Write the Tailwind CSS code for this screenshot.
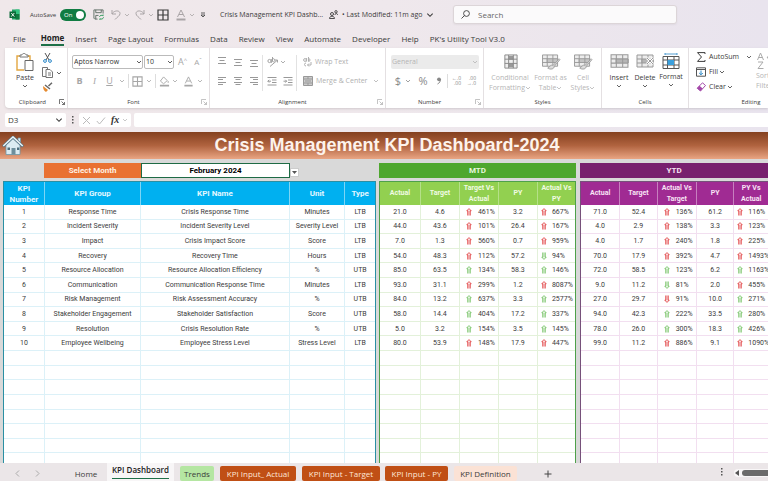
<!DOCTYPE html>
<html lang="en">
<head>
    <meta charset="UTF-8">
    <meta name="viewport" content="width=device-width, initial-scale=1.0">
    <title>Crisis Management KPI Dashboard</title>
    <script src="https://cdn.jsdelivr.net/npm/@tailwindcss/browser@4"></script>
</head>
<body class="h-screen flex flex-col overflow-hidden bg-linear-to-r from-[#f0e8ea] via-[#efe8ec] to-[#e9e4ee] font-['Open_Sans','Noto_Sans',sans-serif] text-[8px] leading-[10px] text-[#3b3b3b]">

    <svg class="hidden">
        <defs>
            <symbol id="chev" viewBox="0 0 6 6"><path d="M1 2l2 2 2-2" fill="none" stroke="currentColor" stroke-width=".8"/></symbol>
            <symbol id="launch" viewBox="0 0 6 6"><path d="M.5 5V.5H5M2.5 2.5l3 3M5.500 3v2.500H3" fill="none" stroke="currentColor" stroke-width=".7"/></symbol>
            <symbol id="grid" viewBox="0 0 12 12"><path d="M1 1h10v10H1zM6 1v10M1 6h10" fill="none" stroke="currentColor" stroke-width="1.200"/></symbol>
            <symbol id="fontcolor" viewBox="0 0 12 12"><path d="M2.500 8L6 1l3.500 7M4 5.500h4" fill="none" stroke="currentColor"/><path d="M1.500 9.500h9v2h-9z" fill="currentColor"/></symbol>
            <symbol id="table" viewBox="0 0 18 14"><path d="M1 1h16v12H1z" fill="#ececec"/><path d="M5 5h13v4H5z" fill="#b5b5b5"/><path d="M1 1h16v12H1zM1 5h16M1 9h16M6 1v12M12 1v12" fill="none" stroke="currentColor"/></symbol>
            <symbol id="brush" viewBox="0 0 20 17"><path d="M1 1h16v12H1z" fill="#ececec"/><path d="M5 5h12v4H5z" fill="#c4c4c4"/><path d="M1 1h16v12H1zM1 5h16M1 9h16M6 1v12M12 1v12" fill="none" stroke="currentColor"/><path d="M18.500 5l-6 7c-3-1-4 2-6 3 3 2 7 1 7-2l6-7z" fill="#ddd" stroke="currentColor" stroke-width=".9"/></symbol>
            <symbol id="up" viewBox="0 0 6 8"><path d="M3 .6L.8 2.800h1v4.700M3 .6l2.200 2.200h-1v4.700" fill="none" stroke="currentColor" stroke-width=".9"/><path d="M1.800 2.500h2.400v5H1.800z" fill="currentColor" fill-opacity=".25"/></symbol>
            <symbol id="down" viewBox="0 0 6 8"><path d="M3 7.400L.8 5.200h1V.5M3 7.400l2.200-2.200h-1V.5" fill="none" stroke="currentColor" stroke-width=".9"/><path d="M1.800.5h2.400v5H1.800z" fill="currentColor" fill-opacity=".25"/></symbol>
        </defs>
    </svg>

    <!-- Title bar -->
    <header class="h-[29px] shrink-0 flex items-center pl-[9px]">
        <svg class="w-[11px] h-[11px]" viewBox="0 0 11 11"><path d="M3 .5h7.500v10H3z" fill="#21a366"/><path d="M6.500.5h4V5h-4z" fill="#33c481"/><path d="M6.500 5h4v5.500h-4z" fill="#107c41"/><path d="M.5 2.500h6.500v6.500H.5z" fill="#0b6b38"/><path d="M2.300 4l3 3.600M5.300 4l-3 3.600" stroke="#fff" stroke-width=".9"/></svg>
        <label for="autosave" class="ml-[10px] w-[30px] text-[6px]">AutoSave</label>
        <span class="relative w-[26px] h-[12px] rounded-full bg-[#117c43] flex items-center justify-between pl-1 pr-[2px] text-[6px] text-white">
            <input id="autosave" type="checkbox" checked class="absolute inset-0 opacity-0">On<span class="w-2 h-2 rounded-full bg-white"></span>
        </span>
        <button class="ml-[7px]" aria-label="Save"><svg class="w-[11px] h-[11px] text-[#5b6b62]" viewBox="0 0 12 12" fill="none" stroke="currentColor"><path d="M11 5V1H1v9l1 1h3M3 1v3h6V1M3 11V7h3"/><path d="M7 8.500a2.500 2.500 0 0 1 4-1V6M11.500 9a2.500 2.500 0 0 1-4 1.500V12" stroke="#2f9a5b"/></svg></button>
        <button class="ml-[7px] flex items-center text-[#a9a4a6]" aria-label="Undo"><svg class="w-[10px] h-[11px]" viewBox="0 0 10 11" fill="none" stroke="currentColor"><path d="M1 1v4h4M1 5c2-4 8-4 8-.5C9 7 6 8 4 10.500"/></svg><svg class="ml-[3px] w-[6px] h-[6px]"><use href="#chev"/></svg></button>
        <button class="ml-[5px] flex items-center text-[#a9a4a6]" aria-label="Redo"><svg class="w-[10px] h-[11px]" viewBox="0 0 10 11" fill="none" stroke="currentColor"><path d="M9 1v4H5M9 5C7 1 1 1 1 4.500 1 7 4 8 6 10.500"/></svg><svg class="ml-[3px] w-[6px] h-[6px]"><use href="#chev"/></svg></button>
        <button class="ml-[3px]" aria-label="Borders"><svg class="w-[12px] h-[12px]"><use href="#grid"/></svg></button>
        <button class="ml-[6px] flex items-center text-[#a9a4a6]" aria-label="Font color"><svg class="w-[12px] h-[12px]"><use href="#fontcolor"/></svg><svg class="ml-[2px] w-[6px] h-[6px]"><use href="#chev"/></svg></button>
        <button class="ml-[5px]" aria-label="Customize toolbar"><svg class="w-[6px] h-[6px]" viewBox="0 0 6 6" fill="none" stroke="currentColor" stroke-width=".8"><path d="M1 1h4M1 3l2 2 2-2z"/></svg></button>
        <span class="ml-[14px] w-[109px] text-[7px] whitespace-nowrap">Crisis Management KPI Dashb...</span>
        <svg class="w-[9px] h-[9px]" viewBox="0 0 9 9" fill="none" stroke="currentColor" stroke-width=".9"><circle cx="3" cy="4" r="1.500"/><path d="M.5 8.500c0-3 5-3 5 0zM6 5c0-2 2.500-2 2.500 0"/><circle cx="7" cy="1.800" r="1.200"/></svg>
        <button class="ml-[4px] w-[92px] flex items-center justify-between text-[7px] whitespace-nowrap">• Last Modified: 11m ago<svg class="w-[8px] h-[8px]"><use href="#chev"/></svg></button>
        <label class="ml-[19px] w-[224px] h-[19px] rounded-[3px] bg-[#fbfafb] border border-[#dcd5d8] shadow-xs flex items-center pl-[7px]">
            <svg class="w-[9px] h-[9px]" viewBox="0 0 9 9" fill="none" stroke="currentColor" stroke-width=".9"><circle cx="5.500" cy="3.500" r="2.900"/><path d="M3.500 5.500L.5 8.500"/></svg>
            <input type="text" placeholder="Search" aria-label="Search" class="ml-2 flex-1 min-w-0 outline-none placeholder:text-[#666]">
        </label>
    </header>

    <!-- Ribbon tabs -->
    <nav class="h-[19px] shrink-0 flex items-center gap-[11px] pl-[13px] whitespace-nowrap">
        <button class="mr-[4px]">File</button>
        <button class="h-[14px] border-b-2 border-[#1e7048] font-bold text-[#222]">Home</button>
        <button>Insert</button>
        <button>Page Layout</button>
        <button>Formulas</button>
        <button>Data</button>
        <button>Review</button>
        <button>View</button>
        <button>Automate</button>
        <button>Developer</button>
        <button>Help</button>
        <button>PK's Utility Tool V3.0</button>
    </nav>

    <!-- Ribbon -->
    <div class="h-[60px] shrink-0 ml-[5px] flex overflow-hidden rounded-bl-[4px] bg-white shadow-sm text-[7px] leading-[10px]">
        <section class="w-[63px] shrink-0 flex flex-col border-r border-[#e4e0e2]">
            <div class="h-[47px] flex pt-[5px]">
                <button class="w-[36px] pl-[4px] flex flex-col items-center">
                    <svg class="w-[18px] h-[19px]" viewBox="0 0 18 19" fill="none"><path d="M12 4V3H1v14h7" stroke="#e3a640" stroke-width="1.400"/><path d="M12 3h2v4" stroke="#e3a640" stroke-width="1.400"/><path d="M4 4V2h2c0-2 4-2 4 0h2v2z" fill="#fff" stroke="#777"/><path d="M9 7.500h8v10H9z" fill="#fff" stroke="#666"/></svg>
                    <span class="mt-[1px]">Paste</span>
                    <svg class="w-[6px] h-[6px]"><use href="#chev"/></svg>
                </button>
                <div class="flex flex-col gap-[4px] pl-[1px]">
                    <button aria-label="Cut"><svg class="ml-[1px] w-[9px] h-[10px]" viewBox="0 0 9 10" fill="none"><path d="M2 0l4 7M7 0L3 7" stroke="#555"/><circle cx="2" cy="8" r="1.400" stroke="#2b88c8"/><circle cx="7" cy="8" r="1.400" stroke="#2b88c8"/></svg></button>
                    <button class="flex items-center gap-[3px]" aria-label="Copy"><svg class="w-[11px] h-[11px]" viewBox="0 0 11 11" fill="#fff" stroke="#666" stroke-width=".9"><path d="M.5.5h5v9h-5z"/><path d="M4 2.500h4l2.500 2.500v5.500H4zM6 6h3M6 8h3"/></svg><svg class="w-[6px] h-[6px]"><use href="#chev"/></svg></button>
                    <button aria-label="Format painter"><svg class="w-[11px] h-[10px]" viewBox="0 0 11 10"><path d="M1 4l5 4-2 2C2 9 1 7 1 4z" fill="#e58a2f"/><path d="M10 .8L6.500 4M3 3l5 4" stroke="#666" stroke-width="1.500"/></svg></button>
                </div>
            </div>
            <div class="flex items-center justify-end gap-[13px] pr-[2px] h-[13px] text-[6px]">Clipboard<svg class="w-[6px] h-[6px]"><use href="#launch"/></svg></div>
        </section>

        <section class="w-[142px] shrink-0 flex flex-col border-r border-[#e4e0e2]">
            <div class="h-[47px] flex flex-col gap-[5px] pt-[7px] pl-1 text-[#a6a6a6]">
                <div class="flex h-[14px] items-center">
                    <span class="grid w-[71px] items-center text-[#333]">
                        <select aria-label="Font" class="col-start-1 row-start-1 h-[14px] appearance-none border border-[#bbb] rounded-[2px] pl-[1px]"><option>Aptos Narrow</option></select>
                        <svg class="col-start-1 row-start-1 justify-self-end mr-[1px] w-[6px] h-[6px] pointer-events-none"><use href="#chev"/></svg>
                    </span>
                    <span class="grid ml-[1px] w-[30px] items-center text-[#333]">
                        <select aria-label="Font size" class="col-start-1 row-start-1 h-[14px] appearance-none border border-[#bbb] rounded-[2px] pl-[1px]"><option>10</option></select>
                        <svg class="col-start-1 row-start-1 justify-self-end mr-[1px] w-[6px] h-[6px] pointer-events-none"><use href="#chev"/></svg>
                    </span>
                    <button class="ml-[4px] flex text-[9px]" aria-label="Increase font size">A<span class="text-[6px] leading-[6px]">^</span></button>
                    <button class="ml-[7px] flex text-[8px]" aria-label="Decrease font size">A<span class="text-[6px] leading-[6px]">ˇ</span></button>
                </div>
                <div class="flex h-[14px] items-center text-[9px]">
                    <button class="w-[15px] font-bold">B</button>
                    <button class="w-[15px] italic font-['Liberation_Serif',serif]">I</button>
                    <button class="w-[15px] underline">U</button>
                    <svg class="ml-[2px] w-[6px] h-[6px]"><use href="#chev"/></svg>
                    <span class="ml-[3px] w-px h-[14px] bg-[#ddd]"></span>
                    <button class="ml-[3px]" aria-label="Borders"><svg class="w-[11px] h-[11px]"><use href="#grid"/></svg></button>
                    <svg class="ml-[3px] w-[6px] h-[6px]"><use href="#chev"/></svg>
                    <span class="ml-[3px] w-px h-[14px] bg-[#ddd]"></span>
                    <button class="ml-[3px]" aria-label="Fill color"><svg class="w-[11px] h-[11px]" viewBox="0 0 12 12"><path d="M5 1l4 4-4 3.500L1.500 5.500zM10 5.500v2" fill="none" stroke="currentColor"/><path d="M1 9.500h10v2H1z" fill="currentColor"/></svg></button>
                    <svg class="ml-[2px] w-[6px] h-[6px]"><use href="#chev"/></svg>
                    <button class="ml-[5px]" aria-label="Font color"><svg class="w-[11px] h-[11px]"><use href="#fontcolor"/></svg></button>
                    <svg class="ml-[3px] w-[6px] h-[6px]"><use href="#chev"/></svg>
                </div>
            </div>
            <div class="grid grid-cols-[1fr_auto_1fr] items-center pr-[2px] h-[13px] text-[6px]"><span></span><span class="pr-2">Font</span><svg class="justify-self-end w-[6px] h-[6px] text-[#aaa]"><use href="#launch"/></svg></div>
        </section>

        <section class="w-[176px] shrink-0 flex flex-col border-r border-[#e4e0e2]">
            <div class="h-[47px] flex pt-[7px] text-[#999]">
                <div class="flex flex-col gap-[9px] pl-[7px] pt-[2px]">
                    <div class="flex gap-[6px]">
                        <button aria-label="Top align"><svg class="w-[10px] h-[10px]" viewBox="0 0 10 10" stroke="currentColor"><path d="M1 .5h8M2.500 3.500h5M1 6.500h8"/></svg></button>
                        <button aria-label="Middle align"><svg class="w-[10px] h-[10px]" viewBox="0 0 10 10" stroke="currentColor"><path d="M1 2.500h8M2.500 5.500h5M1 8.500h8"/></svg></button>
                        <button aria-label="Bottom align"><svg class="w-[10px] h-[10px]" viewBox="0 0 10 10" stroke="currentColor"><path d="M1 3.500h8M2.500 6.500h5M1 9.500h8"/></svg></button>
                    </div>
                    <div class="flex gap-[6px]">
                        <button aria-label="Align left"><svg class="w-[10px] h-[10px]" viewBox="0 0 10 10" stroke="currentColor"><path d="M1 1.500h8M1 3.500h5M1 6.500h8M1 8.500h5"/></svg></button>
                        <button aria-label="Center"><svg class="w-[10px] h-[10px]" viewBox="0 0 10 10" stroke="currentColor"><path d="M1 1.500h8M2.500 3.500h5M1 6.500h8M2.500 8.500h5"/></svg></button>
                        <button aria-label="Align right"><svg class="w-[10px] h-[10px]" viewBox="0 0 10 10" stroke="currentColor"><path d="M1 1.500h8M4 3.500h5M1 6.500h8M4 8.500h5"/></svg></button>
                    </div>
                </div>
                <div class="ml-[3px] h-[36px] border-l border-[#e2e2e2] flex flex-col gap-[9px] pl-[4px] pt-[2px]">
                    <button class="flex items-center gap-[2px]" aria-label="Orientation"><svg class="w-[11px] h-[10px]" viewBox="0 0 11 10" fill="none" stroke="currentColor" stroke-width=".9"><circle cx="2.500" cy="4" r="1.600"/><path d="M4.300 2v4M5.500 0v4.500a1.500 1.500 0 1 0 0-2.500M3 9.500l7-6M8 3h2.500v2.500"/></svg><svg class="w-[6px] h-[6px]"><use href="#chev"/></svg></button>
                    <div class="flex gap-[6px]">
                        <button aria-label="Decrease indent"><svg class="w-[10px] h-[10px]" viewBox="0 0 10 10" fill="none" stroke="currentColor"><path d="M.5 1.500h9M5 4h4.500M5 6.500h4.500M.5 9h9M4 5.200H.8l1.400-1.400M.8 5.200l1.400 1.400"/></svg></button>
                        <button aria-label="Increase indent"><svg class="w-[10px] h-[10px]" viewBox="0 0 10 10" fill="none" stroke="currentColor"><path d="M.5 1.500h9M5 4h4.500M5 6.500h4.500M.5 9h9M.5 5.200h3.200L2.300 3.800M3.700 5.200L2.300 6.600"/></svg></button>
                    </div>
                </div>
                <div class="ml-[3px] h-[36px] border-l border-[#e2e2e2] flex flex-col gap-[9px] pl-[6px] pt-[2px] text-[#b0b0b0]">
                    <button class="flex items-center gap-[3px]"><svg class="w-[9px] h-[10px]" viewBox="0 0 9 10" fill="none" stroke="currentColor"><circle cx="2" cy="3" r="1.400"/><path d="M3.600 1v3.600M5.500 0v4.500a1.400 1.400 0 1 0 0-3M3 6a1.500 1.500 0 1 0 0 3M8 5v3H4.500l1.500-1.500M4.500 8L6 9.500"/></svg>Wrap Text</button>
                    <button class="flex items-center gap-[3px]"><svg class="w-[10px] h-[10px]" viewBox="0 0 10 10" fill="none" stroke="#999"><path d="M.5.5h9v9h-9z" fill="#ccc"/><path d="M.5 3h9M.5 7h9M5 .5V3M5 7v2.500M2 5h6"/></svg>Merge &amp; Center<svg class="ml-[3px] w-[6px] h-[6px]"><use href="#chev"/></svg></button>
                </div>
            </div>
            <div class="grid grid-cols-[1fr_auto_1fr] items-center pr-[2px] h-[13px] text-[6px]"><span></span><span class="pr-2">Alignment</span><svg class="justify-self-end w-[6px] h-[6px] text-[#aaa]"><use href="#launch"/></svg></div>
        </section>

        <section class="w-[98px] shrink-0 flex flex-col border-r border-[#e4e0e2]">
            <div class="h-[47px] flex flex-col gap-[5px] pt-[7px] pl-[5px] pr-[4px] text-[#888]">
                <span class="grid items-center text-[#b5b5b5]">
                    <select aria-label="Number format" class="col-start-1 row-start-1 h-[14px] appearance-none bg-[#ebebeb] rounded-[2px] pl-[1px]"><option>General</option></select>
                    <svg class="col-start-1 row-start-1 justify-self-end mr-[1px] w-[6px] h-[6px] pointer-events-none"><use href="#chev"/></svg>
                </span>
                <div class="flex h-[14px] items-center text-[11px]">
                    <button class="w-[14px]">$</button>
                    <svg class="mr-[4px] w-[6px] h-[6px]"><use href="#chev"/></svg>
                    <button class="w-[16px]">%</button>
                    <button class="w-[16px]" aria-label="Comma style"><svg class="mx-auto w-[6px] h-[8px]" viewBox="0 0 6 8"><circle cx="3" cy="2.300" r="1.900" fill="currentColor"/><path d="M4.500 2c0 2.500-1 4-3 5" fill="none" stroke="currentColor"/></svg></button>
                    <span class="mr-[3px] w-px h-[14px] bg-[#ddd]"></span>
                    <button class="flex flex-col w-[10px] text-[5px] leading-[5px] items-end" aria-label="Increase decimal"><span>←.0</span><span>.00</span></button>
                    <button class="ml-[5px] flex flex-col w-[10px] text-[5px] leading-[5px] items-end" aria-label="Decrease decimal"><span>.00</span><span>→.0</span></button>
                </div>
            </div>
            <div class="grid grid-cols-[1fr_auto_1fr] items-center pr-[2px] h-[13px] text-[6px]"><span></span><span class="pr-2">Number</span><svg class="justify-self-end w-[6px] h-[6px] text-[#aaa]"><use href="#launch"/></svg></div>
        </section>

        <section class="w-[118px] shrink-0 flex flex-col border-r border-[#e4e0e2]">
            <div class="h-[47px] flex pt-[6px] pl-[4px] text-[#b5b5b5]">
                <button class="w-[44px] flex flex-col items-center gap-[3px]"><svg class="w-[17px] h-[16px] text-[#888]" viewBox="0 0 18 17"><path d="M3 1h13v14H3z" fill="#eee"/><path d="M7 2h5v4H7zM7 10h5v4H7z" fill="#999"/><path d="M3 1h13v14H3zM3 5.500h13M3 10h13M7 1v14M12 1v14" fill="none" stroke="currentColor"/></svg><span>Conditional<br><span class="flex items-center">Formatting<svg class="w-[6px] h-[6px]"><use href="#chev"/></svg></span></span></button>
                <button class="w-[37px] flex flex-col items-center gap-[3px]"><svg class="w-[20px] h-[16px] text-[#999]"><use href="#brush"/></svg><span>Format as<br><span class="flex items-center justify-center">Table<svg class="w-[6px] h-[6px]"><use href="#chev"/></svg></span></span></button>
                <button class="w-[28px] flex flex-col items-center gap-[3px]"><svg class="w-[20px] h-[16px] text-[#999]"><use href="#brush"/></svg><span>Cell<br><span class="flex items-center">Styles<svg class="w-[6px] h-[6px]"><use href="#chev"/></svg></span></span></button>
            </div>
            <div class="h-[13px] flex items-center justify-center text-[6px]">Styles</div>
        </section>

        <section class="w-[87px] shrink-0 flex flex-col border-r border-[#e4e0e2]">
            <div class="h-[47px] flex pt-[5px] pl-[4px]">
                <button class="w-[26px] flex flex-col items-center"><svg class="w-[19px] h-[16px] text-[#999]"><use href="#table"/></svg><span class="mt-[4px]">Insert</span><svg class="w-[6px] h-[6px]"><use href="#chev"/></svg></button>
                <button class="w-[26px] flex flex-col items-center"><svg class="w-[18px] h-[16px] text-[#999]" viewBox="0 0 18 16"><use href="#table" width="18" height="16"/><path d="M11 5l6 6M17 5l-6 6" stroke="#fff" stroke-width="2.500"/><path d="M11 5l6 6M17 5l-6 6" stroke="#999"/></svg><span class="mt-[4px]">Delete</span><svg class="w-[6px] h-[6px]"><use href="#chev"/></svg></button>
                <button class="w-[26px] flex flex-col items-center"><svg class="w-[18px] h-[16px]" viewBox="0 0 18 16" fill="none"><path d="M3 0v2M15 0v2M3 1h12" stroke="#2b88c8" stroke-width=".8"/><path d="M1 3.500h16v12H1zM1 7h16M1 12h16M5.500 3.500v12M12 3.500v12" stroke="#555"/><path d="M5.500 7H12v5H5.500z" fill="#3ba0dd"/></svg><span class="mt-[3px]">Format</span><svg class="w-[6px] h-[6px]"><use href="#chev"/></svg></button>
            </div>
            <div class="h-[13px] flex items-center justify-center text-[6px]">Cells</div>
        </section>

        <section class="w-[124px] shrink-0 flex flex-col">
            <div class="h-[47px] flex pl-[7px] pt-1">
                <div class="w-[56px] flex flex-col gap-[5px]">
                    <button class="flex items-center"><svg class="mr-[3px] w-[10px] h-[10px]" viewBox="0 0 10 10" fill="none" stroke="currentColor"><path d="M9 2V.6H1.500L5.500 5l-4 4.400H9V8"/></svg>AutoSum<svg class="ml-auto w-[6px] h-[6px]"><use href="#chev"/></svg></button>
                    <button class="flex items-center"><svg class="mr-[3px] w-[10px] h-[10px]" viewBox="0 0 10 10" fill="none"><path d="M.5.8h9v8.400h-9zM.5 2.500h9" stroke="#555"/><path d="M5 3.500v4M3.200 6L5 7.800 6.800 6" stroke="#2b88c8"/></svg>Fill<svg class="ml-[1px] w-[6px] h-[6px]"><use href="#chev"/></svg></button>
                    <button class="flex items-center"><svg class="mr-[3px] w-[10px] h-[10px]" viewBox="0 0 10 10"><path d="M6.500.8l3 2.700-5 5.500-3.300-2.800z" fill="#fff" stroke="#a347a8"/><path d="M3.500 3.700l3.200 2.900L4.500 9 1.200 6.200z" fill="#a347a8"/></svg>Clear<svg class="ml-[1px] w-[6px] h-[6px]"><use href="#chev"/></svg></button>
                </div>
                <button class="pl-[4px] flex flex-col items-start text-left text-[#b5b5b5]">
                    <svg class="w-[20px] h-[18px]" viewBox="0 0 20 18" fill="none" stroke="#aaa"><path d="M1.500 8l3-7 3 7M2.500 5.500h4M2 10h5l-5 6.500h5.500M11 5h8l-3 4v4l-2-1V9z"/></svg>
                    <span class="mt-[1px] whitespace-nowrap">Sort &amp;<br>Filter</span>
                </button>
            </div>
            <div class="h-[13px] flex items-center justify-center text-[6px]">Editing</div>
        </section>
    </div>

    <!-- Formula bar -->
    <div class="h-[24px] shrink-0 flex items-center pl-[5px]">
        <button class="w-[61px] h-[14px] rounded-[2px] bg-white flex items-center justify-between px-[3px]">D3<svg class="w-[8px] h-[8px]"><use href="#chev"/></svg></button>
        <svg class="ml-[5px] w-[4px] h-[8px]" viewBox="0 0 4 8" fill="#555"><path d="M1 0h1.500v1.500H1zM1 3h1.500v1.500H1zM1 6h1.500v1.500H1z"/></svg>
        <div class="ml-[4px] w-[52px] h-[14px] rounded-[2px] bg-white flex items-center gap-[5px] pl-[3px] text-[#bbb]">
            <svg class="w-[9px] h-[9px]" viewBox="0 0 9 9" stroke="currentColor"><path d="M1 1l7 7M8 1L1 8"/></svg>
            <svg class="w-[10px] h-[9px]" viewBox="0 0 10 9" fill="none" stroke="currentColor"><path d="M.8 5l2.700 3L9 1.500"/></svg>
            <button class="flex items-center font-['Liberation_Serif',serif] italic font-bold text-[10px] text-[#333]">fx<svg class="ml-[3px] w-[6px] h-[6px] text-[#bbb]"><use href="#chev"/></svg></button>
        </div>
        <input type="text" aria-label="Formula" class="ml-[3px] flex-1 h-[14px] bg-white rounded-l-[2px] outline-none">
    </div>

    <!-- Sheet -->
    <main class="flex-1 min-h-0 overflow-hidden bg-[#d9d9d9] font-['Roboto','Liberation_Sans',sans-serif]">
        <div class="h-[27px] grid grid-cols-[24px_1fr_18px] items-center px-[2px] bg-linear-to-b from-[#84401f] via-[#b0633f] to-[#e9a583]">
            <svg class="w-[22px] h-[20px]" viewBox="0 0 22 20"><path d="M4 9v9.500h14V9l-7-6.500z" fill="#dcecf2" stroke="#6d98aa" stroke-width=".8"/><path d="M16 2h2.500v5L16 5z" fill="#dcecf2" stroke="#6d98aa" stroke-width=".7"/><path d="M1 10.500L11 1l10 9.500" fill="none" stroke="#54788a" stroke-width="2.800"/><path d="M1.300 10L11 .9l9.700 9.100" fill="none" stroke="#eef6f8" stroke-width="1.400"/><path d="M9.500 12h4v6.500h-4z" fill="#6e8f9c"/><path d="M5.500 11.500H8V14H5.500zM15 11.500h2.300V14H15z" fill="#4d6f7e"/></svg>
            <h1 class="text-center font-['Liberation_Sans',sans-serif] font-bold text-[18px] leading-[27px] text-[#fdf3ec]">Crisis Management KPI Dashboard-2024</h1>
        </div>

        <div class="flex pl-[3px] mt-[4px]">
            <!-- KPI list -->
            <div class="w-[373px] grow-373 basis-0">
                <div class="flex h-[15px] mb-[3px]">
                    <span class="w-[11%]"></span>
                    <label for="month" class="w-[26%] bg-[#e97132] text-center leading-[15px] font-bold text-[#fff0e2]">Select Month</label>
                    <select id="month" class="w-[40%] appearance-none border border-[#1e6b45] bg-white text-center font-bold text-black"><option>February 2024</option></select>
                    <span class="mt-[5px] w-[9px] h-[9px] bg-white border border-[#ccc] flex items-center justify-center"><svg class="w-[5px] h-[3px]" viewBox="0 0 5 3"><path d="M0 0h5L2.500 3z" fill="#555"/></svg></span>
                </div>
                <table class="w-full h-[287px] table-fixed border-separate border-spacing-0 border-x border-t border-[#2a8fa3] bg-white text-center text-[7px] leading-[10px]">
                    <colgroup><col class="w-[11%]"><col class="w-[26%]"><col class="w-[40%]"><col class="w-[15%]"><col class="w-[8%]"></colgroup>
                    <thead class="h-[23px] bg-[#00b0f0] text-[#e4f7ff] text-[8px] leading-[11px]"><tr><th class="border-r border-[#7dd5f5]">KPI<br>Number</th><th class="border-r border-[#7dd5f5]">KPI Group</th><th class="border-r border-[#7dd5f5]">KPI Name</th><th class="border-r border-[#7dd5f5]">Unit</th><th>Type</th></tr></thead>
                    <tbody id="kpis"></tbody>
                </table>
            </div>
            <!-- MTD -->
            <div class="ml-[3px] w-[197px] grow-197 basis-0">
                <h2 class="h-[15px] mb-[3px] bg-[#4ea72e] text-center leading-[15px] font-bold text-[#e8f7df]">MTD</h2>
                <table class="w-full h-[287px] table-fixed border-separate border-spacing-0 border-x border-t border-[#4ea04a] bg-white text-center text-[7px] leading-[10px]">
                    <colgroup><col class="w-[21%]"><col class="w-[20%]"><col class="w-[20%]"><col class="w-[20%]"><col class="w-[19%]"></colgroup>
                    <thead class="h-[23px] bg-[#92d050] text-[#f1fbe5] leading-[11px]"><tr><th class="border-r border-[#b5e089]">Actual</th><th class="border-r border-[#b5e089]">Target</th><th class="border-r border-[#b5e089]">Target Vs<br>Actual</th><th class="border-r border-[#b5e089]">PY</th><th>Actual Vs<br>PY</th></tr></thead>
                    <tbody id="mtd"></tbody>
                </table>
            </div>
            <!-- YTD -->
            <div class="ml-[4px] w-[188px] grow-188 basis-0">
                <h2 class="h-[15px] mb-[3px] bg-[#78206e] text-center leading-[15px] font-bold text-[#f5e3f3]">YTD</h2>
                <table class="w-full h-[287px] table-fixed border-separate border-spacing-0 border-l border-t border-[#76517a] bg-white text-center text-[7px] leading-[10px]">
                    <colgroup><col class="w-[21%]"><col class="w-[20%]"><col class="w-[21%]"><col class="w-[20%]"><col class="w-[18%]"></colgroup>
                    <thead class="h-[23px] bg-[#a02b93] text-[#f8e4f5] leading-[11px]"><tr><th class="border-r border-[#c77fbf]">Actual</th><th class="border-r border-[#c77fbf]">Target</th><th class="border-r border-[#c77fbf]">Actual Vs<br>Target</th><th class="border-r border-[#c77fbf]">PY</th><th>PY Vs<br>Actual</th></tr></thead>
                    <tbody id="ytd"></tbody>
                </table>
            </div>
        </div>
    </main>

    <!-- Sheet tabs -->
    <footer class="h-[18px] shrink-0 flex items-end bg-[#ebe6e8] whitespace-nowrap leading-[14px]">
        <button class="ml-[15px] h-[15px]" aria-label="Previous sheet"><svg class="w-[5px] h-[7px]" viewBox="0 0 5 7" fill="none" stroke="#aaa"><path d="M4 .5l-3 3 3 3"/></svg></button>
        <button class="ml-[15px] h-[15px]" aria-label="Next sheet"><svg class="w-[5px] h-[7px]" viewBox="0 0 5 7" fill="none" stroke="#aaa"><path d="M1 .5l3 3-3 3"/></svg></button>
        <button class="ml-[26px] h-[15px] w-[40px]">Home</button>
        <button class="ml-[1px] h-[18px] w-[67px] bg-[#f8f6f7] flex justify-center font-semibold text-[#222]"><span class="h-[16px] border-b border-[#1e7048]">KPI Dashboard</span></button>
        <button class="ml-[6px] h-[15px] w-[34px] rounded-[2px] bg-[#b5e6a2]">Trends</button>
        <button class="ml-[6px] h-[15px] w-[76px] rounded-[2px] bg-[#c04f15] text-[#ffe6d8]">KPI Input_ Actual</button>
        <button class="ml-[6px] h-[15px] w-[78px] rounded-[2px] bg-[#c04f15] text-[#ffe6d8]">KPI Input - Target</button>
        <button class="ml-[5px] h-[15px] w-[63px] rounded-[2px] bg-[#c04f15] text-[#ffe6d8]">KPI Input - PY</button>
        <button class="ml-[6px] h-[15px] w-[63px] rounded-[2px] bg-[#fbe2d5]">KPI Definition</button>
        <button class="ml-[27px] h-[15px]" aria-label="New sheet"><svg class="w-[8px] h-[8px]" viewBox="0 0 8 8" stroke="#444"><path d="M4 .5v7M.5 4h7"/></svg></button>
        <svg class="ml-auto mb-[5px] w-[4px] h-[8px]" viewBox="0 0 4 8" fill="#555"><path d="M1 0h1.500v1.500H1zM1 3h1.500v1.500H1zM1 6h1.500v1.500H1z"/></svg>
        <div class="ml-[10px] mb-[4px] w-[34px] h-[8px] rounded-l-full bg-[#f8f6f7] flex items-center gap-[3px]"><svg class="ml-[1px] w-[4px] h-[6px]" viewBox="0 0 4 6"><path d="M4 0v6L0 3z" fill="#555"/></svg><span class="flex-1 h-[6px] rounded-l-full bg-[#6b6b6b]"></span></div>
    </footer>

    <script>
        const kpis = [
            ['Response Time', 'Crisis Response Time', 'Minutes', 'LTB'],
            ['Incident Severity', 'Incident Severity Level', 'Severity Level', 'LTB'],
            ['Impact', 'Crisis Impact Score', 'Score', 'LTB'],
            ['Recovery', 'Recovery Time', 'Hours', 'LTB'],
            ['Resource Allocation', 'Resource Allocation Efficiency', '%', 'UTB'],
            ['Communication', 'Communication Response Time', 'Minutes', 'LTB'],
            ['Risk Management', 'Risk Assessment Accuracy', '%', 'UTB'],
            ['Stakeholder Engagement', 'Stakeholder Satisfaction', 'Score', 'UTB'],
            ['Resolution', 'Crisis Resolution Rate', '%', 'UTB'],
            ['Employee Wellbeing', 'Employee Stress Level', 'Stress Level', 'LTB']
        ];
        // percentages carry a sign: + up / - down, r = red, g = green
        const mtd = [
            ['21.0', '4.6', '+r461%', '3.2', '+r667%'],
            ['44.0', '43.6', '+r101%', '26.4', '+r167%'],
            ['7.0', '1.3', '+r560%', '0.7', '+r959%'],
            ['54.0', '48.3', '+r112%', '57.2', '-g94%'],
            ['85.0', '63.5', '+g134%', '58.3', '+g146%'],
            ['93.0', '31.1', '+r299%', '1.2', '+r8087%'],
            ['84.0', '13.2', '+g637%', '3.3', '+g2577%'],
            ['58.0', '14.4', '+g404%', '17.2', '+g337%'],
            ['5.0', '3.2', '+g154%', '3.5', '+g145%'],
            ['80.0', '53.9', '+r148%', '17.9', '+r447%']
        ];
        const ytd = [
            ['71.0', '52.4', '+r136%', '61.2', '+r116%'],
            ['4.0', '2.9', '+r138%', '3.3', '+r123%'],
            ['4.0', '1.7', '+r240%', '1.8', '+r225%'],
            ['70.0', '17.9', '+r392%', '4.7', '+r1493%'],
            ['72.0', '58.5', '+g123%', '6.2', '+g1163%'],
            ['9.0', '11.2', '-g81%', '2.0', '+r455%'],
            ['27.0', '29.7', '-r91%', '10.0', '+g271%'],
            ['94.0', '42.3', '+g222%', '33.5', '+g280%'],
            ['78.0', '26.0', '+g300%', '18.3', '+g426%'],
            ['99.0', '11.2', '+r886%', '9.1', '+r1090%']
        ];

        function cell(v, i) {
            if (!/^[+-][rg]/.test(v)) return v || '&nbsp;';
            const color = v[1] === 'r' ? 'text-[#e0383a]' : 'text-[#6cbf5b]';
            const pad = i === 2 ? 'pl-[6px] gap-[6px]' : 'pl-[3px] gap-[5px]';
            return `<span class="flex items-center ${pad}"><svg class="w-[6px] h-[8px] shrink-0 ${color}"><use href="#${v[0] === '+' ? 'up' : 'down'}"/></svg>${v.slice(2)}</span>`;
        }

        function fill(id, rows, line) {
            let html = '';
            for (let r = 0; r < 18; r++) {
                const row = rows[r] || ['', '', '', '', ''];
                html += '<tr>' + row.map((v, i) => `<td class="border-r last:border-r-0 border-b ${line} whitespace-nowrap">${cell(v, i)}</td>`).join('') + '</tr>';
            }
            document.getElementById(id).innerHTML = html;
        }

        fill('kpis', kpis.map((k, i) => [String(i + 1), ...k]), 'border-[#dcf1f8]');
        fill('mtd', mtd, 'border-[#e3f1da]');
        fill('ytd', ytd, 'border-[#f2dff0]');
    </script>
</body>
</html>
